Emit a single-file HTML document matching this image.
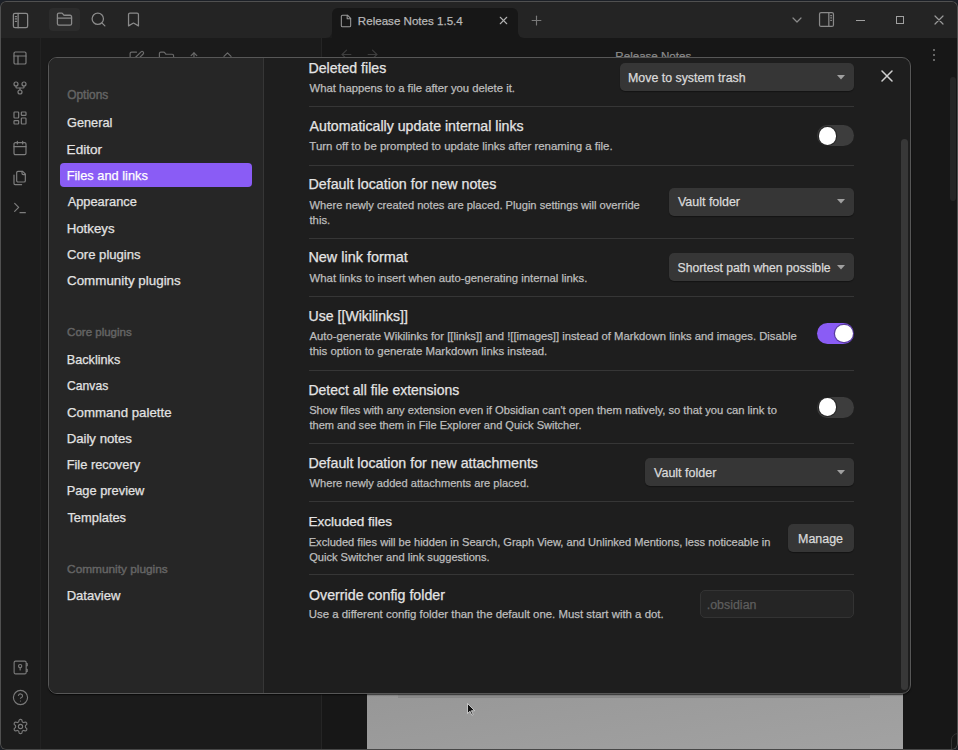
<!DOCTYPE html><html><head><meta charset="utf-8"><style>
*{box-sizing:border-box;margin:0;padding:0}
html,body{width:958px;height:750px;overflow:hidden;background:#1c2027}
body{position:relative;font-family:"Liberation Sans",sans-serif}
.a{position:absolute}
.t{position:absolute;white-space:nowrap;-webkit-text-stroke:0.25px currentColor}
</style></head><body>
<div class="a" style="left:0;top:0;width:958px;height:750px;clip-path:inset(1px 0 0 0 round 6px)">
<div class="a" style="left:0;top:1px;width:958px;height:37px;background:#242424;border-radius:6px 6px 0 0"></div>
<div class="a" style="left:0;top:38px;width:41px;height:712px;background:#1c1c1c"></div>
<div class="a" style="left:40px;top:38px;width:1px;height:712px;background:#222"></div>
<div class="a" style="left:41px;top:38px;width:280px;height:712px;background:#1b1b1b"></div>
<div class="a" style="left:321px;top:38px;width:1px;height:712px;background:#252525"></div>
<div class="a" style="left:322px;top:38px;width:636px;height:712px;background:#171717"></div>
<div class="a" style="left:332px;top:8px;width:186px;height:31px;background:#171717;border-radius:6px 6px 0 0"></div>
<div class="a" style="left:0;top:30px;width:332px;height:8px;background:#1b1b1b"></div>
<div class="a" style="left:0;top:1px;width:332px;height:37px;background:#242424;border-radius:6px 0 6px 0"></div>
<div class="a" style="left:518px;top:30px;width:440px;height:8px;background:#171717"></div>
<div class="a" style="left:518px;top:1px;width:440px;height:37px;background:#242424;border-radius:0 6px 0 6px"></div>
<div class="a" style="left:49px;top:8px;width:31px;height:23px;background:#2c2c2c;border-radius:4px"></div>
<svg style="position:absolute;left:11px;top:11px;width:19px;height:19px" viewBox="0 0 24 24" fill="none" stroke="#8a8a8a" stroke-width="1.6" stroke-linecap="round" stroke-linejoin="round"><rect x="3" y="3" width="18" height="18" rx="2"/><path d="M9 3v18"/><path d="M5.5 7h1.5M5.5 10h1.5M5.5 13h1.5"/></svg>
<svg style="position:absolute;left:56px;top:11px;width:17px;height:17px" viewBox="0 0 24 24" fill="none" stroke="#8a8a8a" stroke-width="1.8" stroke-linecap="round" stroke-linejoin="round"><path d="M4 20h16a2 2 0 0 0 2-2V8a2 2 0 0 0-2-2h-7.93a2 2 0 0 1-1.66-.9l-.82-1.2A2 2 0 0 0 7.93 3H4a2 2 0 0 0-2 2v13c0 1.1.9 2 2 2Z"/><path d="M2 10h20"/></svg>
<svg style="position:absolute;left:90px;top:11px;width:17px;height:17px" viewBox="0 0 24 24" fill="none" stroke="#8a8a8a" stroke-width="1.8" stroke-linecap="round" stroke-linejoin="round"><circle cx="11" cy="11" r="8"/><path d="m21 21-4.3-4.3"/></svg>
<svg style="position:absolute;left:125px;top:11px;width:17px;height:17px" viewBox="0 0 24 24" fill="none" stroke="#8a8a8a" stroke-width="1.8" stroke-linecap="round" stroke-linejoin="round"><path d="m19 21-7-4-7 4V5a2 2 0 0 1 2-2h10a2 2 0 0 1 2 2v16z"/></svg>
<svg style="position:absolute;left:339px;top:14px;width:14px;height:14px" viewBox="0 0 24 24" fill="none" stroke="#9a9a9a" stroke-width="1.8" stroke-linecap="round" stroke-linejoin="round"><path d="M14.5 2H6a2 2 0 0 0-2 2v16a2 2 0 0 0 2 2h12a2 2 0 0 0 2-2V7.5L14.5 2z"/><path d="M14 2v6h6"/></svg>
<div class="t" style="left:357.87px;top:16.30px;font-size:11.58px;line-height:11.58px;color:#b8b8b8;">Release Notes 1.5.4</div>
<svg style="position:absolute;left:497px;top:14px;width:13px;height:13px" viewBox="0 0 24 24" fill="none" stroke="#b0b0b0" stroke-width="2" stroke-linecap="round" stroke-linejoin="round"><path d="M18 6 6 18"/><path d="m6 6 12 12"/></svg>
<svg style="position:absolute;left:529px;top:13px;width:15px;height:15px" viewBox="0 0 24 24" fill="none" stroke="#7a7a7a" stroke-width="1.8" stroke-linecap="round" stroke-linejoin="round"><path d="M5 12h14"/><path d="M12 5v14"/></svg>
<svg style="position:absolute;left:789px;top:12px;width:16px;height:16px" viewBox="0 0 24 24" fill="none" stroke="#8a8a8a" stroke-width="1.8" stroke-linecap="round" stroke-linejoin="round"><path d="m6 9 6 6 6-6"/></svg>
<svg style="position:absolute;left:817px;top:11px;width:19px;height:17px" viewBox="1 1 22 22" fill="none" stroke="#8a8a8a" stroke-width="1.6" stroke-linecap="round" stroke-linejoin="round"><rect x="3" y="3" width="18" height="18" rx="2"/><path d="M15 3v18"/><path d="M17.5 7h1M17.5 10h1M17.5 13h1"/></svg>
<div class="a" style="left:856px;top:19.5px;width:9px;height:1.5px;background:#a0a0a0"></div>
<div class="a" style="left:895.6px;top:15.7px;width:8.8px;height:8px;border:1.5px solid #a0a0a0"></div>
<svg style="position:absolute;left:933px;top:14px;width:12px;height:12px" viewBox="0 0 12 12" fill="none" stroke="#9a9a9a" stroke-width="1.2" stroke-linecap="round" stroke-linejoin="round"><path d="M2 2 10 10M10 2 2 10"/></svg>
<svg style="position:absolute;left:12px;top:50px;width:16px;height:16px" viewBox="0 0 24 24" fill="none" stroke="#7d7d7d" stroke-width="1.8" stroke-linecap="round" stroke-linejoin="round"><rect x="3" y="3" width="18" height="18" rx="2"/><path d="M3 9h18"/><path d="M9 21V9"/></svg>
<svg style="position:absolute;left:12px;top:80px;width:16px;height:16px" viewBox="0 0 24 24" fill="none" stroke="#7d7d7d" stroke-width="1.8" stroke-linecap="round" stroke-linejoin="round"><circle cx="12" cy="18" r="3"/><circle cx="6" cy="6" r="3"/><circle cx="18" cy="6" r="3"/><path d="M18 9v2c0 .6-.4 1-1 1H7c-.6 0-1-.4-1-1V9"/><path d="M12 12v3"/></svg>
<svg style="position:absolute;left:12px;top:110px;width:16px;height:16px" viewBox="0 0 24 24" fill="none" stroke="#7d7d7d" stroke-width="1.8" stroke-linecap="round" stroke-linejoin="round"><rect x="3" y="3" width="7" height="9" rx="1"/><rect x="14" y="3" width="7" height="5" rx="1"/><rect x="14" y="12" width="7" height="9" rx="1"/><rect x="3" y="16" width="7" height="5" rx="1"/></svg>
<svg style="position:absolute;left:12px;top:140px;width:16px;height:16px" viewBox="0 0 24 24" fill="none" stroke="#7d7d7d" stroke-width="1.8" stroke-linecap="round" stroke-linejoin="round"><rect x="3" y="4" width="18" height="18" rx="2"/><path d="M16 2v4M8 2v4M3 10h18"/></svg>
<svg style="position:absolute;left:12px;top:170px;width:16px;height:16px" viewBox="0 0 24 24" fill="none" stroke="#7d7d7d" stroke-width="1.8" stroke-linecap="round" stroke-linejoin="round"><path d="M20 7h-3a2 2 0 0 1-2-2V2"/><path d="M9 18a2 2 0 0 1-2-2V4a2 2 0 0 1 2-2h7l4 4v10a2 2 0 0 1-2 2Z"/><path d="M3 7.6v12.8A1.6 1.6 0 0 0 4.6 22h9.8"/></svg>
<svg style="position:absolute;left:12px;top:200px;width:16px;height:16px" viewBox="0 0 24 24" fill="none" stroke="#7d7d7d" stroke-width="1.8" stroke-linecap="round" stroke-linejoin="round"><path d="m4 17 6-6-6-6"/><path d="M12 19h8"/></svg>
<svg style="position:absolute;left:12px;top:658.5px;width:17px;height:17px" viewBox="0 0 24 24" fill="none" stroke="#7a7a7a" stroke-width="1.6" stroke-linecap="round" stroke-linejoin="round"><rect x="3" y="3" width="17" height="18" rx="2"/><circle cx="11.5" cy="10" r="2.3"/><path d="M11.5 12.3V15.5M20.5 6.5h1v3h-1M20.5 14.5h1v3h-1"/></svg>
<svg style="position:absolute;left:12px;top:688.5px;width:17px;height:17px" viewBox="0 0 24 24" fill="none" stroke="#7a7a7a" stroke-width="1.6" stroke-linecap="round" stroke-linejoin="round"><circle cx="12" cy="12" r="10"/><path d="M9.09 9a3 3 0 0 1 5.83 1c0 2-3 3-3 3"/><path d="M12 17h.01"/></svg>
<svg style="position:absolute;left:12px;top:718px;width:17px;height:17px" viewBox="0 0 24 24" fill="none" stroke="#7a7a7a" stroke-width="1.6" stroke-linecap="round" stroke-linejoin="round"><path d="M12.22 2h-.44a2 2 0 0 0-2 2v.18a2 2 0 0 1-1 1.73l-.43.25a2 2 0 0 1-2 0l-.15-.08a2 2 0 0 0-2.73.73l-.22.38a2 2 0 0 0 .73 2.73l.15.1a2 2 0 0 1 1 1.72v.51a2 2 0 0 1-1 1.74l-.15.09a2 2 0 0 0-.73 2.73l.22.38a2 2 0 0 0 2.73.73l.15-.08a2 2 0 0 1 2 0l.43.25a2 2 0 0 1 1 1.73V20a2 2 0 0 0 2 2h.44a2 2 0 0 0 2-2v-.18a2 2 0 0 1 1-1.73l.43-.25a2 2 0 0 1 2 0l.15.08a2 2 0 0 0 2.73-.73l.22-.39a2 2 0 0 0-.73-2.73l-.15-.08a2 2 0 0 1-1-1.74v-.5a2 2 0 0 1 1-1.74l.15-.09a2 2 0 0 0 .73-2.73l-.22-.38a2 2 0 0 0-2.73-.73l-.15.08a2 2 0 0 1-2 0l-.43-.25a2 2 0 0 1-1-1.73V4a2 2 0 0 0-2-2z"/><circle cx="12" cy="12" r="3"/></svg>
<svg style="position:absolute;left:128px;top:49.5px;width:17px;height:17px" viewBox="0 0 24 24" fill="none" stroke="#6a6a6a" stroke-width="1.7" stroke-linecap="round" stroke-linejoin="round"><path d="M12 3H5a2 2 0 0 0-2 2v14a2 2 0 0 0 2 2h14a2 2 0 0 0 2-2v-7"/><path d="M18.4 2.6a2.1 2.1 0 0 1 3 3L12 15l-4 1 1-4Z"/></svg>
<svg style="position:absolute;left:158px;top:49.5px;width:17px;height:17px" viewBox="0 0 24 24" fill="none" stroke="#6a6a6a" stroke-width="1.7" stroke-linecap="round" stroke-linejoin="round"><path d="M4 20h16a2 2 0 0 0 2-2V8a2 2 0 0 0-2-2h-7.9a2 2 0 0 1-1.69-.9L9.6 3.9A2 2 0 0 0 7.93 3H4a2 2 0 0 0-2 2v13a2 2 0 0 0 2 2Z"/></svg>
<svg style="position:absolute;left:188.5px;top:49.5px;width:17px;height:17px" viewBox="0 0 24 24" fill="none" stroke="#6a6a6a" stroke-width="1.7" stroke-linecap="round" stroke-linejoin="round"><path d="m3 8 4-4 4 4"/><path d="M7 4v16"/></svg>
<svg style="position:absolute;left:218.5px;top:49.5px;width:17px;height:17px" viewBox="0 0 24 24" fill="none" stroke="#6a6a6a" stroke-width="1.7" stroke-linecap="round" stroke-linejoin="round"><path d="m7 9 5-5 5 5"/></svg>
<svg style="position:absolute;left:339px;top:47px;width:15px;height:15px" viewBox="0 0 24 24" fill="none" stroke="#3e3e3e" stroke-width="1.8" stroke-linecap="round" stroke-linejoin="round"><path d="m12 19-7-7 7-7"/><path d="M19 12H5"/></svg>
<svg style="position:absolute;left:365px;top:47px;width:15px;height:15px" viewBox="0 0 24 24" fill="none" stroke="#3e3e3e" stroke-width="1.8" stroke-linecap="round" stroke-linejoin="round"><path d="M5 12h14"/><path d="m12 5 7 7-7 7"/></svg>
<div class="t" style="left:615.37px;top:50.71px;font-size:11.57px;line-height:11.57px;color:#8a8a8a;">Release Notes</div>
<div class="a" style="left:932.8px;top:48.8px;width:2.6px;height:2.6px;border-radius:2px;background:#808080"></div>
<div class="a" style="left:932.8px;top:53.8px;width:2.6px;height:2.6px;border-radius:2px;background:#808080"></div>
<div class="a" style="left:932.8px;top:58.8px;width:2.6px;height:2.6px;border-radius:2px;background:#808080"></div>
<div class="a" style="left:949.5px;top:76.5px;width:6.5px;height:124.5px;border-radius:4px;background:#262626"></div>
<div class="a" style="left:951px;top:733px;width:20px;height:30px;border-radius:7px;border:1px solid #333"></div>
<div class="a" style="left:367px;top:692px;width:536px;height:58px;background:linear-gradient(170deg,#979797,#a2a2a2)"></div>
<div class="a" style="left:367px;top:693px;width:536px;height:1px;background:#a6a6a6"></div>
<div class="a" style="left:398px;top:694px;width:472px;height:4px;background:#8e8e8e;border-bottom:1px solid #888"></div>
<svg style="position:absolute;left:467px;top:703px;width:8px;height:13px" viewBox="0 0 8 13"><path d="M0.5 0.5v10l2.5-2.3 1.8 4 1.4-.6-1.8-3.9h3.3z" fill="#111" stroke="#ddd" stroke-width="0.8"/></svg>
<div class="a" style="left:0;top:1px;width:958px;height:749px;border:1px solid #505050;border-radius:6px;border-bottom-color:#474747"></div>
</div>
<div class="a" style="left:48px;top:57px;width:863px;height:637px;border:1px solid #575757;border-radius:9px;background:#1e1e1e;overflow:hidden;box-shadow:0 1px 1.5px rgba(0,0,0,.7)">
<div class="a" style="left:0;top:0;width:215px;height:100%;background:#262626;border-right:1px solid #363636"></div>
</div>
<div class="t" style="left:67.22px;top:89.92px;font-size:11.91px;line-height:11.91px;color:#646464;-webkit-text-stroke:0.45px currentColor">Options</div>
<div class="a" style="left:60px;top:163px;width:192px;height:24px;background:#8a5cf5;border-radius:4px"></div>
<div class="t" style="left:67.06px;top:117.21px;font-size:12.74px;line-height:12.74px;color:#e2e2e2;">General</div>
<div class="t" style="left:66.61px;top:142.81px;font-size:13.58px;line-height:13.58px;color:#e2e2e2;">Editor</div>
<div class="t" style="left:66.67px;top:169.74px;font-size:12.83px;line-height:12.83px;color:#ffffff;">Files and links</div>
<div class="t" style="left:67.70px;top:196.04px;font-size:12.82px;line-height:12.82px;color:#e2e2e2;">Appearance</div>
<div class="t" style="left:66.64px;top:221.96px;font-size:13.28px;line-height:13.28px;color:#e2e2e2;">Hotkeys</div>
<div class="t" style="left:67.04px;top:248.40px;font-size:13.12px;line-height:13.12px;color:#e2e2e2;">Core plugins</div>
<div class="t" style="left:67.03px;top:274.46px;font-size:13.39px;line-height:13.39px;color:#e2e2e2;">Community plugins</div>
<div class="t" style="left:67.12px;top:326.96px;font-size:11.51px;line-height:11.51px;color:#646464;-webkit-text-stroke:0.45px currentColor">Core plugins</div>
<div class="t" style="left:66.68px;top:353.56px;font-size:12.69px;line-height:12.69px;color:#e2e2e2;">Backlinks</div>
<div class="t" style="left:67.09px;top:380.37px;font-size:12.14px;line-height:12.14px;color:#e2e2e2;">Canvas</div>
<div class="t" style="left:67.04px;top:405.79px;font-size:13.24px;line-height:13.24px;color:#e2e2e2;">Command palette</div>
<div class="t" style="left:66.64px;top:432.17px;font-size:13.21px;line-height:13.21px;color:#e2e2e2;">Daily notes</div>
<div class="t" style="left:66.67px;top:458.84px;font-size:12.83px;line-height:12.83px;color:#e2e2e2;">File recovery</div>
<div class="t" style="left:66.67px;top:485.19px;font-size:12.83px;line-height:12.83px;color:#e2e2e2;">Page preview</div>
<div class="t" style="left:67.44px;top:511.51px;font-size:12.87px;line-height:12.87px;color:#e2e2e2;">Templates</div>
<div class="t" style="left:67.11px;top:563.88px;font-size:11.84px;line-height:11.84px;color:#646464;-webkit-text-stroke:0.45px currentColor">Community plugins</div>
<div class="t" style="left:66.65px;top:589.34px;font-size:13.07px;line-height:13.07px;color:#e2e2e2;">Dataview</div>
<svg style="position:absolute;left:881px;top:70px;width:12px;height:12px" viewBox="0 0 12 12" fill="none" stroke="#d0d0d0" stroke-width="1.5" stroke-linecap="round" stroke-linejoin="round"><path d="M1 1 11 11M11 1 1 11"/></svg>
<div class="a" style="left:901px;top:138.5px;width:6.5px;height:551px;border-radius:4px;background:#383838"></div>
<div class="t" style="left:308.47px;top:60.74px;font-size:14.13px;line-height:14.13px;color:#e4e4e4;">Deleted files</div>
<div class="t" style="left:309.60px;top:82.54px;font-size:11.30px;line-height:11.30px;color:#bdbdbd;">What happens to a file after you delete it.</div>
<div class="a" style="left:309px;top:106.0px;width:545px;height:1px;background:#363636"></div>
<div class="a" style="left:620px;top:63.1px;width:234px;height:28px;background:#363636;border-radius:5px;box-shadow:0 1px 1px rgba(0,0,0,.35)"></div>
<div class="t" style="left:628.01px;top:71.82px;font-size:12.38px;line-height:12.38px;color:#dadada;">Move to system trash</div>
<svg style="position:absolute;left:836px;top:73.5px;width:10px;height:6px" viewBox="0 0 10 6"><path d="M1 1h8L5 5.5z" fill="#a0a0a0"/></svg>
<div class="t" style="left:309.60px;top:118.72px;font-size:14.16px;line-height:14.16px;color:#e4e4e4;">Automatically update internal links</div>
<div class="t" style="left:309.37px;top:141.21px;font-size:11.45px;line-height:11.45px;color:#bdbdbd;">Turn off to be prompted to update links after renaming a file.</div>
<div class="a" style="left:309px;top:164.8px;width:545px;height:1px;background:#363636"></div>
<div class="a" style="left:817px;top:125.4px;width:37px;height:21px;border-radius:11px;background:#3d3d3d"></div>
<div class="a" style="left:818.5px;top:127.2px;width:17.5px;height:17.5px;border-radius:50%;background:#fff;box-shadow:0 0 0 1.2px rgba(0,0,0,.35)"></div>
<div class="t" style="left:308.46px;top:177.42px;font-size:14.28px;line-height:14.28px;color:#e4e4e4;">Default location for new notes</div>
<div class="t" style="left:309.60px;top:199.78px;font-size:11.13px;line-height:11.13px;color:#bdbdbd;">Where newly created notes are placed. Plugin settings will override</div>
<div class="t" style="left:309.49px;top:214.74px;font-size:11.29px;line-height:11.29px;color:#bdbdbd;">this.</div>
<div class="a" style="left:309px;top:238.1px;width:545px;height:1px;background:#363636"></div>
<div class="a" style="left:669px;top:187.5px;width:185px;height:28px;background:#363636;border-radius:5px;box-shadow:0 1px 1px rgba(0,0,0,.35)"></div>
<div class="t" style="left:678.00px;top:196.21px;font-size:12.45px;line-height:12.45px;color:#dadada;">Vault folder</div>
<svg style="position:absolute;left:836px;top:197.9px;width:10px;height:6px" viewBox="0 0 10 6"><path d="M1 1h8L5 5.5z" fill="#a0a0a0"/></svg>
<div class="t" style="left:308.45px;top:250.40px;font-size:14.41px;line-height:14.41px;color:#e4e4e4;">New link format</div>
<div class="t" style="left:309.60px;top:272.60px;font-size:11.34px;line-height:11.34px;color:#bdbdbd;">What links to insert when auto-generating internal links.</div>
<div class="a" style="left:309px;top:296.0px;width:545px;height:1px;background:#363636"></div>
<div class="a" style="left:669px;top:253.2px;width:185px;height:28px;background:#363636;border-radius:5px;box-shadow:0 1px 1px rgba(0,0,0,.35)"></div>
<div class="t" style="left:677.51px;top:262.03px;font-size:12.20px;line-height:12.20px;color:#dadada;">Shortest path when possible</div>
<svg style="position:absolute;left:836px;top:263.6px;width:10px;height:6px" viewBox="0 0 10 6"><path d="M1 1h8L5 5.5z" fill="#a0a0a0"/></svg>
<div class="t" style="left:308.61px;top:309.37px;font-size:14.09px;line-height:14.09px;color:#e4e4e4;">Use [[Wikilinks]]</div>
<div class="t" style="left:309.60px;top:331.38px;font-size:11.25px;line-height:11.25px;color:#bdbdbd;">Auto-generate Wikilinks for [[links]] and ![[images]] instead of Markdown links and images. Disable</div>
<div class="t" style="left:309.49px;top:346.04px;font-size:11.41px;line-height:11.41px;color:#bdbdbd;">this option to generate Markdown links instead.</div>
<div class="a" style="left:309px;top:370.1px;width:545px;height:1px;background:#363636"></div>
<div class="a" style="left:817px;top:323.1px;width:37px;height:21px;border-radius:11px;background:#8a5cf5"></div>
<div class="a" style="left:835px;top:324.9px;width:17.5px;height:17.5px;border-radius:50%;background:#fff;box-shadow:0 0 0 1.2px rgba(0,0,0,.35)"></div>
<div class="t" style="left:308.48px;top:382.76px;font-size:13.99px;line-height:13.99px;color:#e4e4e4;">Detect all file extensions</div>
<div class="t" style="left:309.15px;top:404.60px;font-size:11.23px;line-height:11.23px;color:#bdbdbd;">Show files with any extension even if Obsidian can't open them natively, so that you can link to</div>
<div class="t" style="left:309.49px;top:419.94px;font-size:11.06px;line-height:11.06px;color:#bdbdbd;">them and see them in File Explorer and Quick Switcher.</div>
<div class="a" style="left:309px;top:443.1px;width:545px;height:1px;background:#363636"></div>
<div class="a" style="left:817px;top:396.6px;width:37px;height:21px;border-radius:11px;background:#3d3d3d"></div>
<div class="a" style="left:818.5px;top:398.4px;width:17.5px;height:17.5px;border-radius:50%;background:#fff;box-shadow:0 0 0 1.2px rgba(0,0,0,.35)"></div>
<div class="t" style="left:308.46px;top:455.68px;font-size:14.20px;line-height:14.20px;color:#e4e4e4;">Default location for new attachments</div>
<div class="t" style="left:309.60px;top:477.51px;font-size:11.10px;line-height:11.10px;color:#bdbdbd;">Where newly added attachments are placed.</div>
<div class="a" style="left:309px;top:500.8px;width:545px;height:1px;background:#363636"></div>
<div class="a" style="left:645px;top:458.1px;width:209px;height:28px;background:#363636;border-radius:5px;box-shadow:0 1px 1px rgba(0,0,0,.35)"></div>
<div class="t" style="left:654.00px;top:466.64px;font-size:12.53px;line-height:12.53px;color:#dadada;">Vault folder</div>
<svg style="position:absolute;left:836px;top:468.5px;width:10px;height:6px" viewBox="0 0 10 6"><path d="M1 1h8L5 5.5z" fill="#a0a0a0"/></svg>
<div class="t" style="left:308.51px;top:515.22px;font-size:13.56px;line-height:13.56px;color:#e4e4e4;">Excluded files</div>
<div class="t" style="left:308.71px;top:536.61px;font-size:11.09px;line-height:11.09px;color:#bdbdbd;">Excluded files will be hidden in Search, Graph View, and Unlinked Mentions, less noticeable in</div>
<div class="t" style="left:309.16px;top:551.62px;font-size:11.08px;line-height:11.08px;color:#bdbdbd;">Quick Switcher and link suggestions.</div>
<div class="a" style="left:309px;top:573.9px;width:545px;height:1px;background:#363636"></div>
<div class="a" style="left:788px;top:523.9px;width:66px;height:28px;background:#363636;border-radius:5px;box-shadow:0 1px 1px rgba(0,0,0,.35)"></div>
<div class="t" style="left:798.00px;top:532.85px;font-size:12.47px;line-height:12.47px;color:#dadada;">Manage</div>
<div class="t" style="left:309.03px;top:587.85px;font-size:14.23px;line-height:14.23px;color:#e4e4e4;">Override config folder</div>
<div class="t" style="left:308.80px;top:609.34px;font-size:11.41px;line-height:11.41px;color:#bdbdbd;">Use a different config folder than the default one. Must start with a dot.</div>
<div class="a" style="left:700px;top:590px;width:154px;height:28px;background:#252525;border:1px solid #333;border-radius:5px"></div>
<div class="t" style="left:706.78px;top:598.69px;font-size:12.42px;line-height:12.42px;color:#5e5e5e;">.obsidian</div>
</body></html>
